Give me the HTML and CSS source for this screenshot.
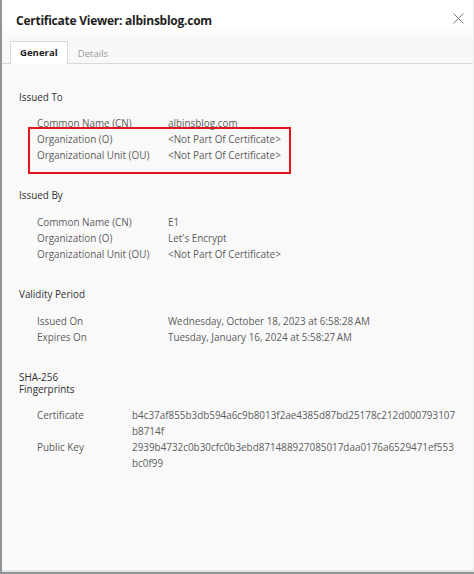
FILE: index.html
```html
<!DOCTYPE html>
<html lang="en">
<head>
<meta charset="utf-8">
<title>Certificate Viewer</title>
<link rel="stylesheet" href="styles.css">
</head>
<body>
<div class="dialog">
  <header class="titlebar">
    <h1 class="title">Certificate Viewer: albinsblog.com</h1>
    <button class="close" aria-label="Close">
      <svg width="11" height="11" viewBox="0 0 11 11"><path d="M0.5 0.5 L10.5 10.5 M10.5 0.5 L0.5 10.5" stroke="#7a7a7a" stroke-width="1" fill="none"/></svg>
    </button>
  </header>
  <nav class="tabs">
    <span class="tab active">General</span>
    <span class="tab">Details</span>
  </nav>
  <main class="content">
    <section class="group first">
      <h2 class="group-title">Issued To</h2>
      <div class="rows">
        <span class="label">Common Name (CN)</span><span class="value">albinsblog.com</span>
        <span class="label">Organization (O)</span><span class="value">&lt;Not Part Of Certificate&gt;</span>
        <span class="label">Organizational Unit (OU)</span><span class="value">&lt;Not Part Of Certificate&gt;</span>
      </div>
      <div class="annotation"></div>
    </section>
    <section class="group">
      <h2 class="group-title">Issued By</h2>
      <div class="rows">
        <span class="label">Common Name (CN)</span><span class="value">E1</span>
        <span class="label">Organization (O)</span><span class="value">Let's Encrypt</span>
        <span class="label">Organizational Unit (OU)</span><span class="value">&lt;Not Part Of Certificate&gt;</span>
      </div>
    </section>
    <section class="group">
      <h2 class="group-title">Validity Period</h2>
      <div class="rows">
        <span class="label">Issued On</span><span class="value">Wednesday, October 18, 2023 at 6:58:28&#8201;AM</span>
        <span class="label">Expires On</span><span class="value">Tuesday, January 16, 2024 at 5:58:27&#8201;AM</span>
      </div>
    </section>
    <section class="group fingerprints">
      <h2 class="group-title">SHA-256<br>Fingerprints</h2>
      <div class="rows">
        <span class="label">Certificate</span><span class="value hash"><span>b4c37af855b3db594a6c9b8013f2ae4385d87bd25178c212d000793107</span><span>b8714f</span></span>
        <span class="label">Public Key</span><span class="value hash"><span>2939b4732c0b30cfc0b3ebd871488927085017daa0176a6529471ef553</span><span>bc0f99</span></span>
      </div>
    </section>
  </main>
</div>
</body>
</html>
```
FILE: styles.css
```css
* { box-sizing: border-box; }
html, body { margin: 0; padding: 0; }
body {
  width: 474px;
  height: 574px;
  overflow: hidden;
  background: #8f9596;
  font-family: "Open Sans", "Noto Sans", sans-serif;
}
.dialog {
  margin-left: 2px;
  height: 572px;
  background: #f9f9f9;
  border-right: 1px solid #ececec;
  display: flex;
  flex-direction: column;
  border-bottom: 2px solid #e3e3e3;
}
.titlebar {
  height: 40px;
  background: linear-gradient(#ffffff 0, #ffffff 26px, #f8f8f8 40px);
  display: flex;
  align-items: flex-start;
  justify-content: space-between;
  padding: 12px 0 0 14px;
}
.title {
  margin: 0;
  font-size: 12px;
  font-weight: 700;
  letter-spacing: -0.25px;
  line-height: 18px;
  color: #1e1e1e;
}
.close {
  border: 0;
  background: transparent;
  padding: 0;
  margin: 1px 9px 0 0;
  width: 11px;
  height: 11px;
  display: flex;
}
.tabs {
  display: flex;
  padding-left: 8px;
  border-bottom: 1px solid #d9d9d9;
  background: #f8f8f8;
  height: 24px;
  align-items: flex-end;
}
.tab {
  font-size: 9.6px;
  line-height: 20px;
  padding: 0 9px;
  color: #9a9a9a;
  border: 1px solid transparent;
  border-bottom: 0;
  margin-bottom: -1px;
}
.tab.active {
  height: 23px;
  padding-top: 1px;
  background: #ffffff;
  color: #1e1e1e;
  font-weight: 700;
  border-color: #d9d9d9;
}
.content {
  padding: 25px 0 0 17px;
  font-size: 9.9px;
  line-height: 16px;
  color: #5c5c5c;
}
.group { margin-bottom: 24px; position: relative; }
.group-title {
  margin: 0 0 11px;
  font-size: 9.9px;
  font-weight: 400;
  line-height: 16px;
  color: #303030;
}
.first .group-title { margin-bottom: 10px; }
.rows {
  display: grid;
  grid-template-columns: 131px auto;
  padding-left: 18px;
}
.hash span { display: block; }
.fingerprints { margin-top: 26px; }
.fingerprints .group-title { line-height: 12px; margin-bottom: 12px; }
.fingerprints .rows { grid-template-columns: 95px auto; }
.annotation {
  position: absolute;
  left: 9px;
  top: 38px;
  width: 263px;
  height: 47px;
  border: 2px solid #e3141e;
  pointer-events: none;
}
```
